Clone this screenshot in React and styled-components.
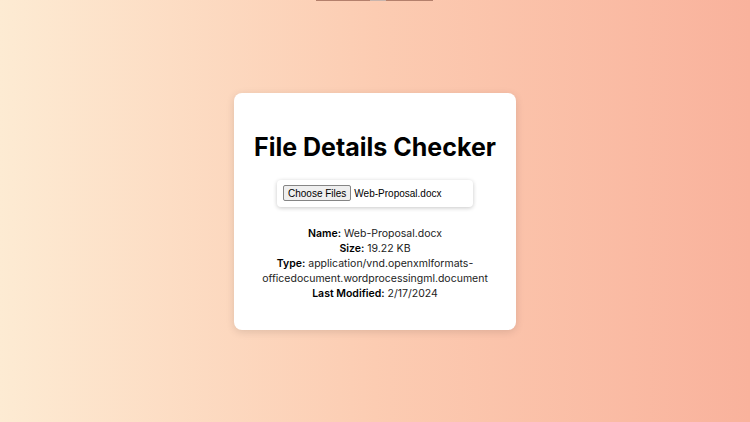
import React from 'react';
import styled, { createGlobalStyle } from 'styled-components';

const GlobalStyle = createGlobalStyle`
    html, body {
        margin: 0;
        padding: 0;
        height: 100%;
    }
    #root {
        height: 100%;
    }
`;

function App() {
    return (
        <>
            <GlobalStyle />
            <Page>
                <TopBar>
                    <TopBarThumb />
                </TopBar>
                <Card>
                    <Title>File Details Checker</Title>
                    <FileBox>
                        <ChooseButton type="button">Choose Files</ChooseButton>
                        <FileName>Web-Proposal.docx</FileName>
                    </FileBox>
                    <Details>
                        <Line><b>Name:</b> Web-Proposal.docx</Line>
                        <Line><b>Size:</b> 19.22 KB</Line>
                        <Line><b>Type:</b> application/vnd.openxmlformats-officedocument.wordprocessingml.document</Line>
                        <Line><b>Last Modified:</b> 2/17/2024</Line>
                    </Details>
                </Card>
            </Page>
        </>
    );
}

export default App;

const Page = styled.div`
    position: relative;
    width: 750px;
    height: 422px;
    background: linear-gradient(90deg, #fdebd3 0%, #fcccb2 50%, #f9b29c 100%);
    display: flex;
    align-items: center;
    justify-content: center;
    font-family: Inter, "Noto Sans", sans-serif;
`;

const TopBar = styled.div`
    position: absolute;
    top: 0;
    left: 316px;
    width: 117px;
    height: 1px;
    background: #b4806c;
`;

const TopBarThumb = styled.div`
    margin-left: 54px;
    width: 16px;
    height: 1px;
    background: #c8b4ac;
`;

const Card = styled.div`
    width: 282px;
    height: 237px;
    box-sizing: border-box;
    background: #fff;
    border-radius: 8px;
    box-shadow: 0 2px 8px rgba(0, 0, 0, 0.12);
    display: flex;
    flex-direction: column;
    align-items: center;
    padding-top: 38px;
`;

const Title = styled.h1`
    margin: 0;
    font-size: 25px;
    font-weight: 700;
    color: #000;
    line-height: 32px;
`;

const FileBox = styled.div`
    margin-top: 17px;
    width: 196px;
    height: 27px;
    box-sizing: border-box;
    border-radius: 4px;
    box-shadow: 0 1px 4px rgba(0, 0, 0, 0.22);
    display: flex;
    align-items: center;
    padding-left: 6px;
    font-family: "Liberation Sans", Arial, sans-serif;
    font-size: 10px;
`;

const ChooseButton = styled.button`
    font-family: "Liberation Sans", Arial, sans-serif;
    font-size: 10px;
    color: #000;
    background: #efefef;
    border: 1px solid #858585;
    border-radius: 2px;
    padding: 1px 4px;
    height: 16px;
    margin: 0 3px 0 0;
`;

const FileName = styled.span`
    color: #000;
`;

const Details = styled.div`
    margin-top: 19px;
    width: 250px;
    text-align: center;
    font-size: 10.5px;
    line-height: 15px;
    color: #222;
`;

const Line = styled.div`
    b {
        font-weight: 600;
        color: #000;
    }
`;
